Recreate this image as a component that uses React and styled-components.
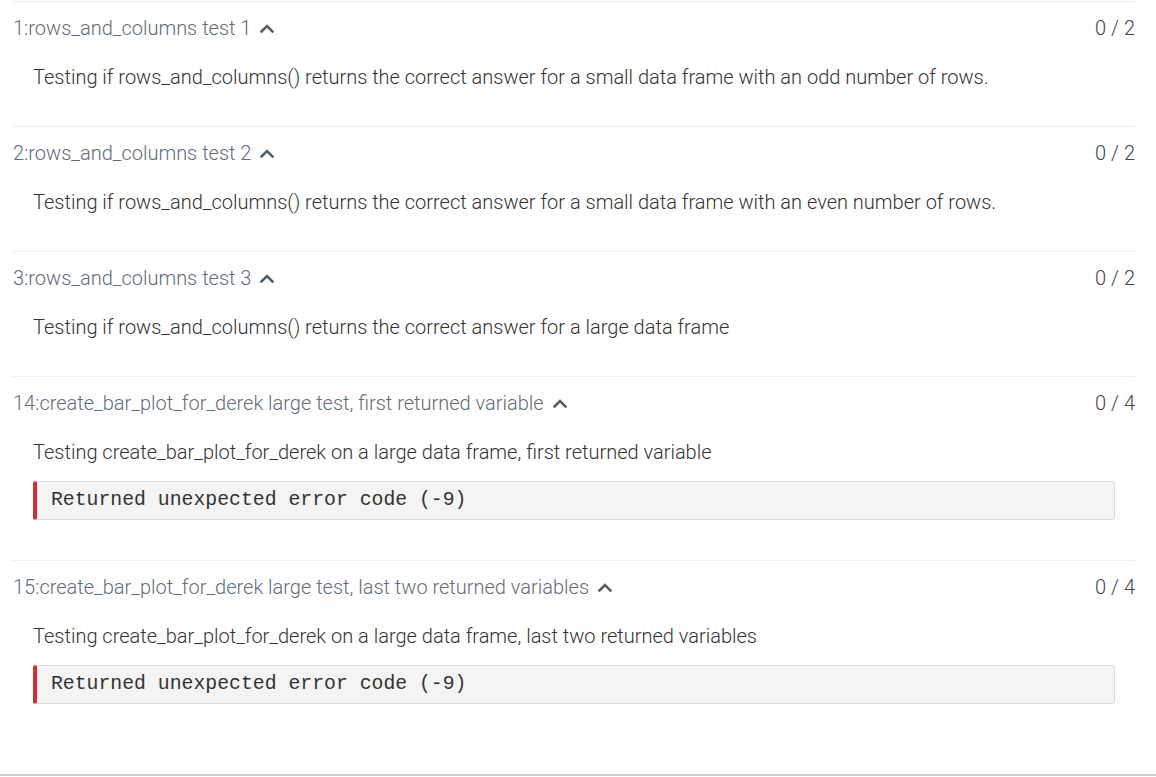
import React from "react";
import styled, { createGlobalStyle } from "styled-components";

const GlobalStyle = createGlobalStyle`
  html, body {
    margin: 0;
    padding: 0;
    background: #fff;
  }
  body {
    font-family: Roboto, "Noto Sans", Arial, sans-serif;
  }
`;

const Page = styled.div`
  padding-top: 1px;
  border-bottom: 2px solid #cccccc;
`;

const List = styled.div`
  margin: 0 21px 0 13px;
  padding-bottom: 30px;
`;

const Section = styled.section`
  border-top: 1px solid #eeeeee;
  padding: 12px 0 20px;
`;

const Header = styled.div`
  display: flex;
  align-items: center;
  justify-content: space-between;
  height: 28px;
  font-size: 20px;
  font-weight: 300;
`;

const Title = styled.div`
  display: flex;
  align-items: center;
  gap: 9px;
  color: #5e6d7c;
`;

const Score = styled.div`
  color: #3d4650;
`;

const Body = styled.div`
  padding: 21px 20px 0;
`;

const Description = styled.p`
  margin: 0 0 15px;
  line-height: 28px;
  font-size: 20px;
  font-weight: 300;
  color: #333;
`;

const Output = styled.pre`
  margin: 0 0 20px;
  padding: 8px 14px;
  background: #f4f4f4;
  border: 1px solid #dddddd;
  border-left: 4px solid #d32f2f;
  border-radius: 2px;
  font-family: "Liberation Mono", "Courier New", monospace;
  font-size: 19.8px;
  line-height: 21px;
  color: #333;
`;

const Chevron = () => (
  <svg width="14" height="9" viewBox="0 0 14 9" fill="none">
    <polyline
      points="1.5,7.5 7,2 12.5,7.5"
      stroke="#4f5f6e"
      strokeWidth="2.6"
      strokeLinecap="square"
    />
  </svg>
);

const tests = [
  {
    title: "1:rows_and_columns test 1",
    score: "0 / 2",
    text: "Testing if rows_and_columns() returns the correct answer for a small data frame with an odd number of rows.",
  },
  {
    title: "2:rows_and_columns test 2",
    score: "0 / 2",
    text: "Testing if rows_and_columns() returns the correct answer for a small data frame with an even number of rows.",
  },
  {
    title: "3:rows_and_columns test 3",
    score: "0 / 2",
    text: "Testing if rows_and_columns() returns the correct answer for a large data frame",
  },
  {
    title: "14:create_bar_plot_for_derek large test, first returned variable",
    score: "0 / 4",
    text: "Testing create_bar_plot_for_derek on a large data frame, first returned variable",
    output: "Returned unexpected error code (-9)",
  },
  {
    title: "15:create_bar_plot_for_derek large test, last two returned variables",
    score: "0 / 4",
    text: "Testing create_bar_plot_for_derek on a large data frame, last two returned variables",
    output: "Returned unexpected error code (-9)",
  },
];

export default function App() {
  return (
    <Page>
      <GlobalStyle />
      <List>
        {tests.map((t) => (
          <Section key={t.title}>
            <Header>
              <Title>
                {t.title}
                <Chevron />
              </Title>
              <Score>{t.score}</Score>
            </Header>
            <Body>
              <Description>{t.text}</Description>
              {t.output && <Output>{t.output}</Output>}
            </Body>
          </Section>
        ))}
      </List>
    </Page>
  );
}
